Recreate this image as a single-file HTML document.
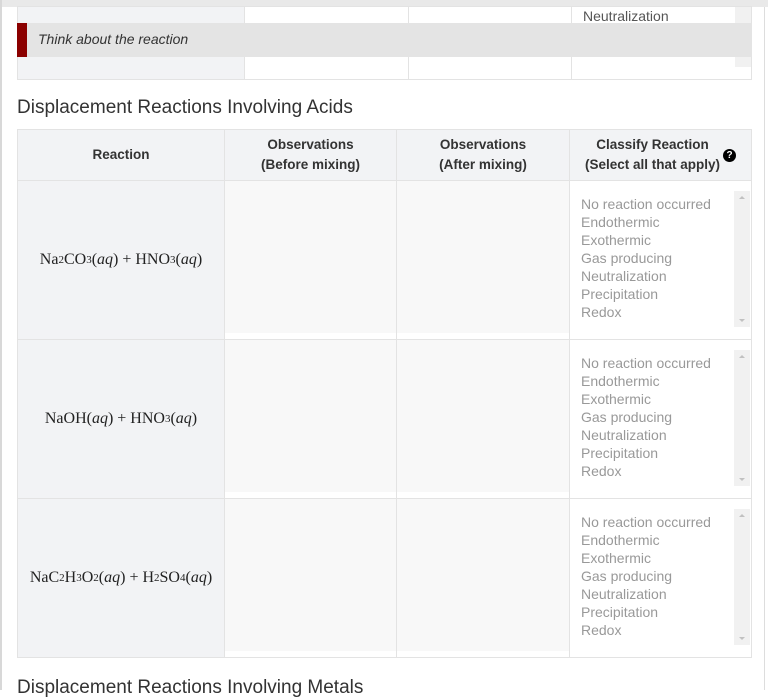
<!DOCTYPE html>
<html><head><meta charset="utf-8"><style>
*{margin:0;padding:0;box-sizing:border-box}
body{width:768px;height:690px;overflow:hidden;background:#fff;font-family:"Liberation Sans",sans-serif;position:relative}
.a{position:absolute}
.cell{position:absolute;border:1px solid #e3e3e3}
.hd{background:#f2f3f5;font-weight:bold;font-size:13.5px;color:#333;text-align:center;display:flex;align-items:center;justify-content:center;line-height:20px}
.rx{background:#f2f3f5;font-family:"Liberation Serif",serif;font-size:16px;color:#222;display:flex;align-items:center;justify-content:center}
.ta{position:absolute;background:#f8f8f8}
.sel{position:absolute;font-size:14px;line-height:18px;color:#999;padding-left:11px}
.sb{position:absolute;width:16px;background:#f1f1f1}
.sb:before{content:"";position:absolute;left:5px;top:5px;border:3px solid transparent;border-bottom:3px solid #c1c1c1;border-top:0}
.sb:after{content:"";position:absolute;left:5px;bottom:5px;border:3px solid transparent;border-top:3px solid #c1c1c1;border-bottom:0}
sub{font-size:11px;vertical-align:-3px;line-height:0}
h2{position:absolute;font-weight:normal;font-size:19px;color:#333;left:17px}
</style></head><body>
<div class="a" style="left:0;top:0;width:768px;height:7px;background:#e9e9e9"></div>
<div class="a" style="left:0;top:0;width:2px;height:690px;background:#d8d8d8"></div>
<div class="a" style="left:764px;top:7px;width:1px;height:683px;background:#ddd"></div>
<!-- top table remnants -->
<div class="cell" style="left:17px;top:6px;width:228px;height:74px;background:#f2f3f5"></div>
<div class="cell" style="left:244px;top:6px;width:165px;height:74px"></div>
<div class="cell" style="left:408px;top:6px;width:164px;height:74px"></div>
<div class="cell" style="left:571px;top:6px;width:181px;height:74px"></div>
<div class="a" style="left:735px;top:7px;width:16px;height:60px;background:#f1f1f1"></div>
<div class="a" style="left:583px;top:8px;font-size:14px;color:#555">Neutralization</div>
<div class="a" style="left:17px;top:23px;width:735px;height:34px;background:#e4e4e4"></div>
<div class="a" style="left:17px;top:23px;width:10px;height:34px;background:#8b0000"></div>
<div class="a" style="left:38px;top:31px;font-size:14px;font-style:italic;color:#333">Think about the reaction</div>
<h2 style="top:97px">Displacement Reactions Involving Acids</h2>
<!-- header -->
<div class="cell hd" style="left:17px;top:129px;width:208px;height:52px">Reaction</div>
<div class="cell hd" style="left:224px;top:129px;width:173px;height:52px">Observations<br>(Before mixing)</div>
<div class="cell hd" style="left:396px;top:129px;width:174px;height:52px">Observations<br>(After mixing)</div>
<div class="cell hd" style="left:569px;top:129px;width:183px;height:52px">Classify Reaction<br>(Select all that apply) <span style="display:inline-block;width:13px;height:13px;border-radius:50%;background:#000;color:#fff;font-size:10px;line-height:13px;margin-left:3px">?</span></div>
<!-- rows -->
<div class="cell rx" style="left:17px;top:180px;width:208px;height:160px">Na<sub>2</sub>CO<sub>3</sub>(<i>aq</i>) + HNO<sub>3</sub>(<i>aq</i>)</div>
<div class="cell rx" style="left:17px;top:339px;width:208px;height:160px">NaOH(<i>aq</i>) + HNO<sub>3</sub>(<i>aq</i>)</div>
<div class="cell rx" style="left:17px;top:498px;width:208px;height:160px">NaC<sub>2</sub>H<sub>3</sub>O<sub>2</sub>(<i>aq</i>) + H<sub>2</sub>SO<sub>4</sub>(<i>aq</i>)</div>

<div class="cell" style="left:224px;top:180px;width:173px;height:160px"></div>
<div class="cell" style="left:396px;top:180px;width:174px;height:160px"></div>
<div class="cell" style="left:569px;top:180px;width:183px;height:160px"></div>
<div class="cell" style="left:224px;top:339px;width:173px;height:160px"></div>
<div class="cell" style="left:396px;top:339px;width:174px;height:160px"></div>
<div class="cell" style="left:569px;top:339px;width:183px;height:160px"></div>
<div class="cell" style="left:224px;top:498px;width:173px;height:160px"></div>
<div class="cell" style="left:396px;top:498px;width:174px;height:160px"></div>
<div class="cell" style="left:569px;top:498px;width:183px;height:160px"></div>

<div class="ta" style="left:225px;top:181px;width:171px;height:152px"></div>
<div class="ta" style="left:397px;top:181px;width:172px;height:152px"></div>
<div class="ta" style="left:225px;top:340px;width:171px;height:152px"></div>
<div class="ta" style="left:397px;top:340px;width:172px;height:152px"></div>
<div class="ta" style="left:225px;top:499px;width:171px;height:152px"></div>
<div class="ta" style="left:397px;top:499px;width:172px;height:152px"></div>

<div class="sel" style="left:570px;top:195px">No reaction occurred<br>Endothermic<br>Exothermic<br>Gas producing<br>Neutralization<br>Precipitation<br>Redox</div>
<div class="sb" style="left:734px;top:191px;height:136px"></div>
<div class="sel" style="left:570px;top:354px">No reaction occurred<br>Endothermic<br>Exothermic<br>Gas producing<br>Neutralization<br>Precipitation<br>Redox</div>
<div class="sb" style="left:734px;top:350px;height:136px"></div>
<div class="sel" style="left:570px;top:513px">No reaction occurred<br>Endothermic<br>Exothermic<br>Gas producing<br>Neutralization<br>Precipitation<br>Redox</div>
<div class="sb" style="left:734px;top:509px;height:136px"></div>

<h2 style="top:677px">Displacement Reactions Involving Metals</h2>
</body></html>
